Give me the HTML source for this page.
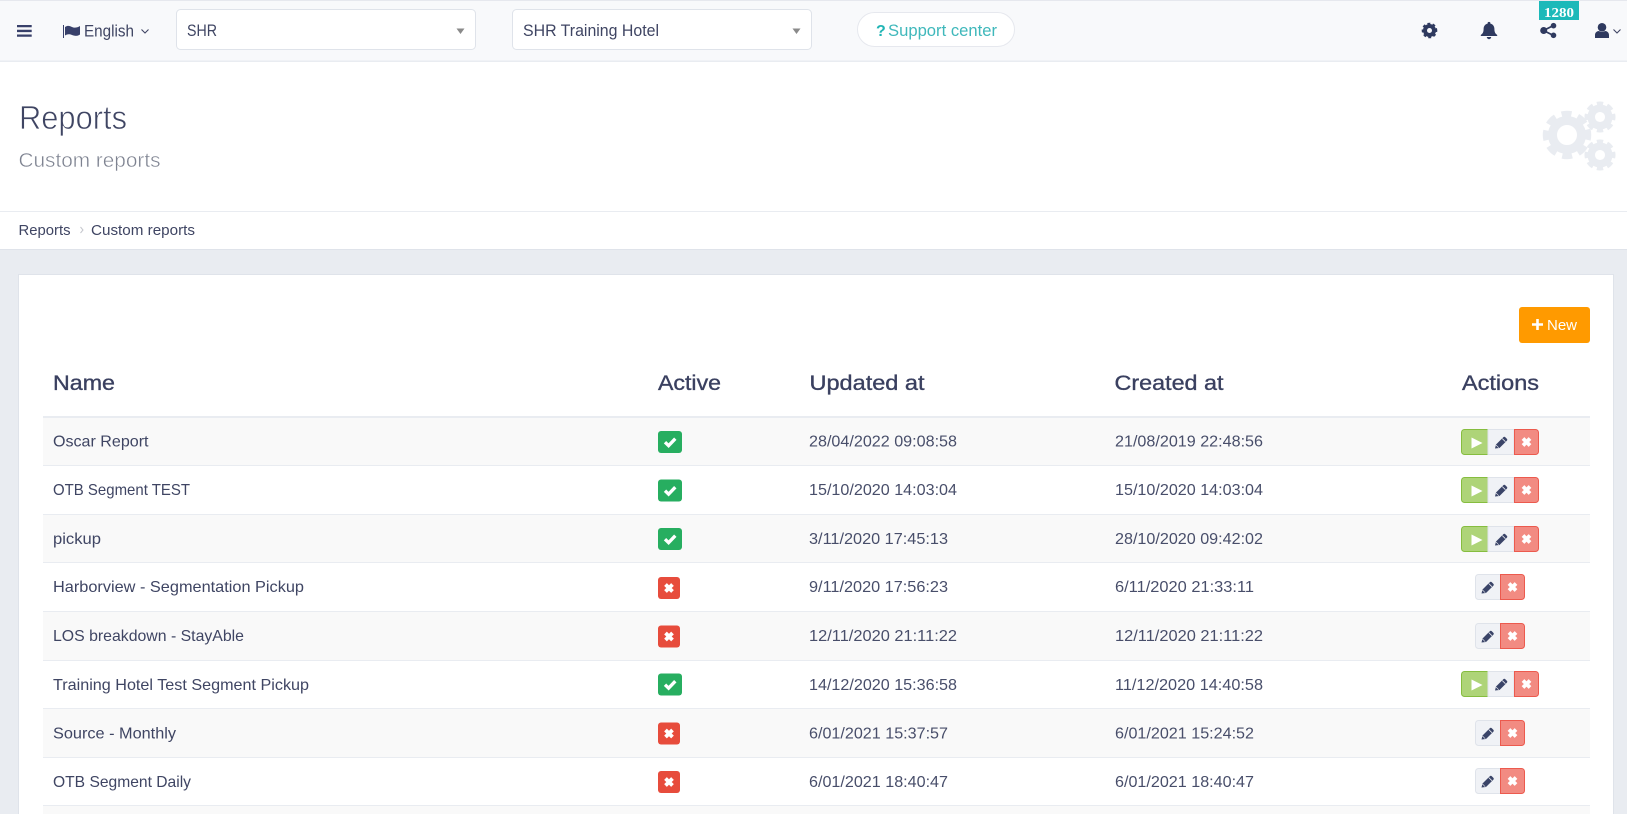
<!DOCTYPE html>
<html lang="en">
<head>
<meta charset="utf-8">
<title>Reports - Custom reports</title>
<style>
html,body{margin:0;padding:0;background:#e9ecf1;width:1627px;height:814px;overflow:hidden}
svg{display:block}
text{font-family:"Liberation Sans",sans-serif;fill:#3f4563;font-size:16px}
.h{font-size:21px;stroke:#3a4060;stroke-width:.35px;fill:#3a4060}
.d{fill:#484e6a}
</style>
</head>
<body>
<svg width="1627" height="814" viewBox="0 0 1627 814" xmlns="http://www.w3.org/2000/svg">
<defs>
<g id="pen"><path d="M0 12.500 1 8.500 8.300 1.200Q9.300.2 10.300 1.200L11.800 2.700Q12.800 3.700 11.800 4.700L4.500 12Z" fill="#3a4468"/><path d="M7.300 2.600 10.400 5.700" stroke="#f0f2f6" stroke-width=".8"/><path d="M1 9 3.800 11.800" stroke="#f0f2f6" stroke-width=".6"/></g>
<g id="x"><path d="M1.500 1.500 8.500 8.500M8.500 1.500 1.500 8.500" stroke="#fff" stroke-width="3.800" fill="none"/></g>
<g id="a3">
<path d="M27 .5H3.500a3 3 0 0 0-3 3v19a3 3 0 0 0 3 3H27z" fill="#aed478" stroke="#86bd3f"/>
<path d="M10.500 8.500v11l11-5.500z" fill="#fff"/>
<rect x="27" y=".5" width="26" height="25" fill="#f0f2f6" stroke="#dfe3ea"/>
<use href="#pen" x="34" y="7"/>
<path d="M53.500 .5h21a3 3 0 0 1 3 3v19a3 3 0 0 1-3 3h-21z" fill="#f28b82" stroke="#ec5a4e"/>
<use href="#x" x="60.500" y="8"/>
</g>
<g id="a2">
<path d="M25.500 .5H3.500a3 3 0 0 0-3 3v19a3 3 0 0 0 3 3h22z" fill="#f0f2f6" stroke="#dfe3ea"/>
<use href="#pen" x="6.500" y="7"/>
<path d="M25.500 .5h21a3 3 0 0 1 3 3v19a3 3 0 0 1-3 3h-21z" fill="#f28b82" stroke="#ec5a4e"/>
<use href="#x" x="32.500" y="8"/>
</g>
<g id="ok"><rect width="24" height="22" rx="3" fill="#27ae60"/><path d="M7 11.200 10.600 14.700 17.300 7.700" fill="none" stroke="#fff" stroke-width="3.300"/></g>
<g id="no"><rect width="22" height="22" rx="3" fill="#e74c3c"/><use href="#x" x="6" y="6"/></g>
</defs>

<!-- backgrounds -->
<rect width="1627" height="814" fill="#e9ecf1"/>
<rect y="0" width="1627" height="61" fill="#f8f9fb"/>
<rect y="0" width="1627" height="1" fill="#e6e8ee"/>
<rect y="61" width="1627" height="188" fill="#fff"/>
<rect y="60.500" width="1627" height="1.500" fill="#e9ecf1"/>
<rect y="211" width="1627" height="1" fill="#e9ecf1"/>
<rect y="249" width="1627" height="1" fill="#dfe3ea"/>

<!-- top bar -->
<path d="M17 25h14.700v2.300H17zM17 29.800h14.700v2.300H17zM17 34.500h14.700v2.300H17z" fill="#38406a"/>
<path d="M63 25h1v13h-1z" fill="#38406a"/>
<path d="M65 27c3-2 5-1 7 0s5 1 8-1v8.500c-3 2-5 1.500-8 .5s-4-1-7 .5z" fill="#38406a"/>
<text x="84" y="36.500" textLength="50" lengthAdjust="spacingAndGlyphs" style="font-size:16.500px">English</text>
<path d="M141.500 29.500 145 33l3.500-3.500" fill="none" stroke="#3f4563" stroke-width="1.100"/>

<rect x="176.500" y="9.500" width="299" height="40" rx="4" fill="#fff" stroke="#dfe3ea"/>
<text x="187" y="36" textLength="30" lengthAdjust="spacingAndGlyphs" style="font-size:16.500px">SHR</text>
<path d="M456.500 28.500h8l-4 5.500z" fill="#8a8a8a"/>
<rect x="512.500" y="9.500" width="299" height="40" rx="4" fill="#fff" stroke="#dfe3ea"/>
<text x="523" y="36" textLength="136" lengthAdjust="spacingAndGlyphs" style="font-size:16.500px">SHR Training Hotel</text>
<path d="M792.500 28.500h8l-4 5.500z" fill="#8a8a8a"/>

<rect x="857.500" y="12.500" width="157" height="34" rx="17" fill="#fff" stroke="#e6e8ee"/>
<text x="876" y="36" style="font-size:16px;font-weight:bold;fill:#22b5b5">?</text>
<text x="888" y="36" textLength="109" lengthAdjust="spacingAndGlyphs" style="font-size:16.500px;fill:#3fb8bb">Support center</text>

<!-- right icons -->
<circle cx="1429.500" cy="30.500" r="6.500" fill="#2f3a5f"/>
<circle cx="1429.500" cy="30.500" r="6.300" fill="none" stroke="#2f3a5f" stroke-width="3" pathLength="80" stroke-dasharray="5.500 4.500" stroke-dashoffset="2.750"/>
<circle cx="1429.500" cy="30.500" r="2.500" fill="#f8f9fb"/>
<circle cx="1489" cy="23.300" r="1.400" fill="#2f3a5f"/>
<path d="M1489 23.500c-3.400 0-5.400 2.400-5.400 5.300 0 3.400-.8 4.700-2.800 6.200v1h16.400v-1c-2-1.500-2.800-2.800-2.800-6.200 0-2.900-2-5.300-5.400-5.300z" fill="#2f3a5f"/>
<path d="M1486.800 37a2.200 2.200 0 0 0 4.400 0z" fill="#2f3a5f"/>
<rect x="1539" y="1" width="40" height="19" fill="#1cb9b9"/>
<text x="1544" y="17" textLength="30" lengthAdjust="spacingAndGlyphs" style="font-family:'Liberation Serif',serif;font-weight:bold;font-size:14px;fill:#fff">1280</text>
<path d="M1543.500 30.500 1553.500 25.500M1543.500 30.500 1553.500 35.500" stroke="#2f3a5f" stroke-width="1.800"/>
<circle cx="1543.700" cy="30.500" r="3.500" fill="#2f3a5f"/>
<circle cx="1553.500" cy="25.700" r="2.800" fill="#2f3a5f"/>
<circle cx="1553.500" cy="35.300" r="2.800" fill="#2f3a5f"/>
<circle cx="1602" cy="27.300" r="4.300" fill="#2f3a5f"/>
<path d="M1595 38v-3c0-2.500 2-4 4-4 .8.600 1.900 1 3 1s2.200-.4 3-1c2 0 4 1.500 4 4v3z" fill="#2f3a5f"/>
<path d="M1613.500 29.500 1617 33l3.500-3.500" fill="none" stroke="#3f4563" stroke-width="1.100"/>

<!-- header -->
<text x="19" y="129" textLength="108" lengthAdjust="spacingAndGlyphs" style="font-size:33px;fill:#3f4563;stroke:#fff;stroke-width:.7px">Reports</text>
<text x="18.500" y="167" textLength="142" lengthAdjust="spacingAndGlyphs" style="font-size:20.500px;fill:#7d8290;stroke:#fff;stroke-width:.45px">Custom reports</text>
<text x="18.500" y="235" textLength="52" lengthAdjust="spacingAndGlyphs" style="font-size:14.500px">Reports</text>
<path d="M80.500 227 83 230l-2.500 3" fill="none" stroke="#c4c6cc" stroke-width="1"/>
<text x="91" y="235" textLength="104" lengthAdjust="spacingAndGlyphs" style="font-size:14.500px">Custom reports</text>

<!-- big gears -->
<g fill="none" stroke="#e9ecf1">
<circle cx="1567" cy="135" r="14.500" stroke-width="9"/>
<circle cx="1567" cy="135" r="20.500" stroke-width="7.500" pathLength="80" stroke-dasharray="6 4" stroke-dashoffset="3"/>
<circle cx="1600" cy="117" r="8.800" stroke-width="7.500"/>
<circle cx="1600" cy="117" r="13" stroke-width="5" pathLength="80" stroke-dasharray="6 4" stroke-dashoffset="3"/>
<circle cx="1600" cy="155" r="8.800" stroke-width="7.500"/>
<circle cx="1600" cy="155" r="13" stroke-width="5" pathLength="80" stroke-dasharray="6 4" stroke-dashoffset="3"/>
</g>

<!-- card -->
<rect x="18.500" y="274.500" width="1595" height="560" fill="#fff" stroke="#dfe3ea"/>
<rect x="1519" y="307" width="71" height="36" rx="3" fill="#ff9a00"/>
<path d="M1532 323.200h4.200V319h2.600v4.200h4.200v2.600h-4.200v4.200h-2.600v-4.200H1532z" fill="#fff"/>
<text x="1547" y="330" textLength="30" lengthAdjust="spacingAndGlyphs" style="font-size:15px;fill:#fff">New</text>

<text class="h" x="53" y="390" textLength="62" lengthAdjust="spacingAndGlyphs">Name</text>
<text class="h" x="658" y="390" textLength="63" lengthAdjust="spacingAndGlyphs">Active</text>
<text class="h" x="809.500" y="390" textLength="115" lengthAdjust="spacingAndGlyphs">Updated at</text>
<text class="h" x="1114.500" y="390" textLength="109" lengthAdjust="spacingAndGlyphs">Created at</text>
<text class="h" x="1462" y="390" textLength="77" lengthAdjust="spacingAndGlyphs">Actions</text>

<!-- rows -->
<rect x="43" y="418" width="1547" height="47" fill="#f9f9f9"/>
<rect x="43" y="514" width="1547" height="48" fill="#f9f9f9"/>
<rect x="43" y="611" width="1547" height="49" fill="#f9f9f9"/>
<rect x="43" y="708" width="1547" height="49" fill="#f9f9f9"/>
<rect x="43" y="805" width="1547" height="9" fill="#f9f9f9"/>
<rect x="43" y="416" width="1547" height="2" fill="#e9ecf1"/>
<g fill="#e9ecf1">
<rect x="43" y="465" width="1547" height="1"/>
<rect x="43" y="514" width="1547" height="1"/>
<rect x="43" y="562" width="1547" height="1"/>
<rect x="43" y="611" width="1547" height="1"/>
<rect x="43" y="660" width="1547" height="1"/>
<rect x="43" y="708" width="1547" height="1"/>
<rect x="43" y="757" width="1547" height="1"/>
<rect x="43" y="805" width="1547" height="1"/>
</g>

<text x="53" y="446.500" textLength="95.500" lengthAdjust="spacingAndGlyphs">Oscar Report</text>
<text x="53" y="495" textLength="137" lengthAdjust="spacingAndGlyphs">OTB Segment TEST</text>
<text x="53" y="544" textLength="48" lengthAdjust="spacingAndGlyphs">pickup</text>
<text x="53" y="592" textLength="251" lengthAdjust="spacingAndGlyphs">Harborview - Segmentation Pickup</text>
<text x="53" y="641" textLength="191" lengthAdjust="spacingAndGlyphs">LOS breakdown - StayAble</text>
<text x="53" y="690" textLength="256" lengthAdjust="spacingAndGlyphs">Training Hotel Test Segment Pickup</text>
<text x="53" y="738.500" textLength="123" lengthAdjust="spacingAndGlyphs">Source - Monthly</text>
<text x="53" y="787" textLength="138" lengthAdjust="spacingAndGlyphs">OTB Segment Daily</text>

<use href="#ok" x="658" y="431"/>
<use href="#ok" x="658" y="479.500"/>
<use href="#ok" x="658" y="528"/>
<use href="#no" x="658" y="577"/>
<use href="#no" x="658" y="625.500"/>
<use href="#ok" x="658" y="673.500"/>
<use href="#no" x="658" y="722.500"/>
<use href="#no" x="658" y="771"/>

<g>
<text class="d" x="809" y="446.500" textLength="148" lengthAdjust="spacingAndGlyphs">28/04/2022 09:08:58</text>
<text class="d" x="809" y="495" textLength="148" lengthAdjust="spacingAndGlyphs">15/10/2020 14:03:04</text>
<text class="d" x="809" y="544" textLength="139" lengthAdjust="spacingAndGlyphs">3/11/2020 17:45:13</text>
<text class="d" x="809" y="592" textLength="139" lengthAdjust="spacingAndGlyphs">9/11/2020 17:56:23</text>
<text class="d" x="809" y="641" textLength="148" lengthAdjust="spacingAndGlyphs">12/11/2020 21:11:22</text>
<text class="d" x="809" y="690" textLength="148" lengthAdjust="spacingAndGlyphs">14/12/2020 15:36:58</text>
<text class="d" x="809" y="738.500" textLength="139" lengthAdjust="spacingAndGlyphs">6/01/2021 15:37:57</text>
<text class="d" x="809" y="787" textLength="139" lengthAdjust="spacingAndGlyphs">6/01/2021 18:40:47</text>
<text class="d" x="1115" y="446.500" textLength="148" lengthAdjust="spacingAndGlyphs">21/08/2019 22:48:56</text>
<text class="d" x="1115" y="495" textLength="148" lengthAdjust="spacingAndGlyphs">15/10/2020 14:03:04</text>
<text class="d" x="1115" y="544" textLength="148" lengthAdjust="spacingAndGlyphs">28/10/2020 09:42:02</text>
<text class="d" x="1115" y="592" textLength="139" lengthAdjust="spacingAndGlyphs">6/11/2020 21:33:11</text>
<text class="d" x="1115" y="641" textLength="148" lengthAdjust="spacingAndGlyphs">12/11/2020 21:11:22</text>
<text class="d" x="1115" y="690" textLength="148" lengthAdjust="spacingAndGlyphs">11/12/2020 14:40:58</text>
<text class="d" x="1115" y="738.500" textLength="139" lengthAdjust="spacingAndGlyphs">6/01/2021 15:24:52</text>
<text class="d" x="1115" y="787" textLength="139" lengthAdjust="spacingAndGlyphs">6/01/2021 18:40:47</text>
</g>

<use href="#a3" x="1461" y="429"/>
<use href="#a3" x="1461" y="477"/>
<use href="#a3" x="1461" y="526"/>
<use href="#a2" x="1475" y="574"/>
<use href="#a2" x="1475" y="623"/>
<use href="#a3" x="1461" y="671"/>
<use href="#a2" x="1475" y="720"/>
<use href="#a2" x="1475" y="768"/>
</svg>
</body>
</html>
